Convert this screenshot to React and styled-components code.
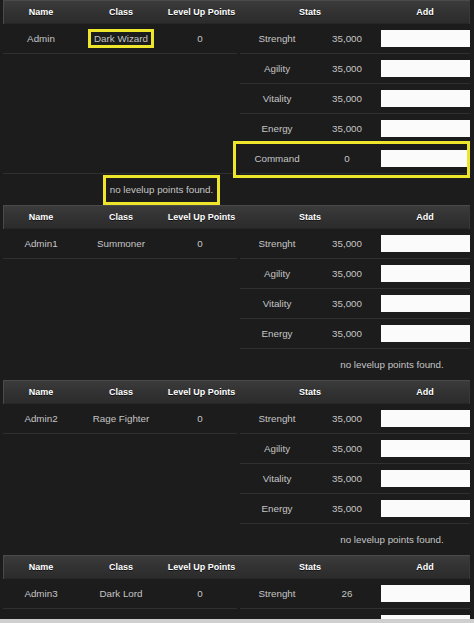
import React from 'react';
import styled, { createGlobalStyle } from 'styled-components';

const GlobalStyle = createGlobalStyle`
  html, body {
    margin: 0;
    padding: 0;
    background: #1c1c1c;
  }
  body {
    font-family: "Liberation Sans", Arial, sans-serif;
    overflow: hidden;
  }
`;

const YELLOW = '#eee62b';
const LINE = '#2f2f2f';

const Page = styled.main`
  width: 474px;
  height: 623px;
  overflow: hidden;
  box-sizing: border-box;
  padding-left: 3px;
  background: #1c1c1c;
`;

const Block = styled.section`
  width: 467px;
`;

const Header = styled.div`
  display: grid;
  grid-template-columns: 76px 84px 77px 140px 90px;
  height: 24px;
  box-sizing: border-box;
  background: linear-gradient(to bottom, #3c3c3c 0%, #333 45%, #2b2b2b 100%);
  box-shadow: inset 1px 1px 0 #4a4a4a, inset -1px 0 0 #383838, inset 0 -1px 0 #262626;
`;

const HeaderCell = styled.div`
  display: flex;
  align-items: center;
  justify-content: center;
  color: #ffffff;
  font-weight: bold;
  font-size: 9px;
  text-shadow: 0 1px 0 #111;
  white-space: nowrap;
`;

const Body = styled.div`
  display: flex;
  align-items: stretch;
`;

const LeftGroup = styled.div`
  width: 234px;
  margin-right: 3px;
  box-sizing: border-box;
  border-bottom: ${(p) => (p.$closed ? `1px solid ${LINE}` : '0')};
`;

const InfoRow = styled.div`
  display: grid;
  grid-template-columns: 76px 84px 74px;
  align-items: center;
  height: 30px;
  box-sizing: border-box;
  border-bottom: 1px solid ${LINE};
`;

const Cell = styled.div`
  text-align: center;
  color: #c5c5c5;
  font-size: 9.8px;
  white-space: nowrap;
`;

const Mark = styled.span`
  display: inline-block;
  border: 3px solid ${YELLOW};
  padding: ${(p) => (p.$tall ? '5px 4px' : '0 3px')};
  line-height: ${(p) => (p.$tall ? '14px' : '13px')};
`;

const StatsGroup = styled.div`
  width: 230px;
`;

const StatRow = styled.div`
  position: relative;
  display: grid;
  grid-template-columns: 74px 66px 90px;
  align-items: center;
  height: 30px;
  box-sizing: border-box;
  border-bottom: 1px solid ${LINE};

  &::after {
    content: '';
    display: ${(p) => (p.$marked ? 'block' : 'none')};
    position: absolute;
    top: -3px;
    bottom: -5px;
    left: -7px;
    right: 0;
    border: 3px solid ${YELLOW};
    pointer-events: none;
  }
`;

const StatInput = styled.input`
  justify-self: end;
  display: block;
  width: 89px;
  height: 17px;
  margin: 0;
  padding: 0;
  border: 0;
  background: #fbfbfb;
  outline: none;
`;

const MessageRow = styled.div`
  display: flex;
  align-items: center;
  height: 31px;
`;

const MessageCell = styled.div`
  margin-left: ${(p) => p.$offset}px;
  width: ${(p) => p.$width}px;
  text-align: center;
  color: #c5c5c5;
  font-size: 9.8px;
  white-space: nowrap;
`;

const BottomBar = styled.div`
  position: fixed;
  left: 0;
  right: 0;
  bottom: 0;
  height: 4px;
  background: #cfcfcf;
`;

const blocks = [
  {
    name: 'Admin',
    cls: 'Dark Wizard',
    markClass: true,
    points: '0',
    stats: [
      ['Strenght', '35,000'],
      ['Agility', '35,000'],
      ['Vitality', '35,000'],
      ['Energy', '35,000'],
      ['Command', '0', true],
    ],
    message: 'left',
    closed: true,
  },
  {
    name: 'Admin1',
    cls: 'Summoner',
    points: '0',
    stats: [
      ['Strenght', '35,000'],
      ['Agility', '35,000'],
      ['Vitality', '35,000'],
      ['Energy', '35,000'],
    ],
    message: 'right',
  },
  {
    name: 'Admin2',
    cls: 'Rage Fighter',
    points: '0',
    stats: [
      ['Strenght', '35,000'],
      ['Agility', '35,000'],
      ['Vitality', '35,000'],
      ['Energy', '35,000'],
    ],
    message: 'right',
  },
  {
    name: 'Admin3',
    cls: 'Dark Lord',
    points: '0',
    stats: [
      ['Strenght', '26'],
      ['Agility', '26'],
      ['Vitality', '26'],
      ['Energy', '26'],
    ],
    message: 'right',
  },
];

function CharacterBlock({ data }) {
  return (
    <Block>
      <Header>
        <HeaderCell>Name</HeaderCell>
        <HeaderCell>Class</HeaderCell>
        <HeaderCell>Level Up Points</HeaderCell>
        <HeaderCell>Stats</HeaderCell>
        <HeaderCell>Add</HeaderCell>
      </Header>
      <Body>
        <LeftGroup $closed={data.closed}>
          <InfoRow>
            <Cell>{data.name}</Cell>
            <Cell>{data.markClass ? <Mark>{data.cls}</Mark> : data.cls}</Cell>
            <Cell>{data.points}</Cell>
          </InfoRow>
        </LeftGroup>
        <StatsGroup>
          {data.stats.map(([label, value, marked]) => (
            <StatRow key={label} $marked={marked}>
              <Cell>{label}</Cell>
              <Cell>{value}</Cell>
              <StatInput type="text" aria-label={label} />
            </StatRow>
          ))}
        </StatsGroup>
      </Body>
      <MessageRow>
        {data.message === 'left' ? (
          <MessageCell $offset={78} $width={161}>
            <Mark $tall>no levelup points found.</Mark>
          </MessageCell>
        ) : (
          <MessageCell $offset={311} $width={156}>
            no levelup points found.
          </MessageCell>
        )}
      </MessageRow>
    </Block>
  );
}

export default function App() {
  return (
    <>
      <GlobalStyle />
      <Page>
        {blocks.map((b) => (
          <CharacterBlock key={b.name} data={b} />
        ))}
      </Page>
      <BottomBar />
    </>
  );
}
